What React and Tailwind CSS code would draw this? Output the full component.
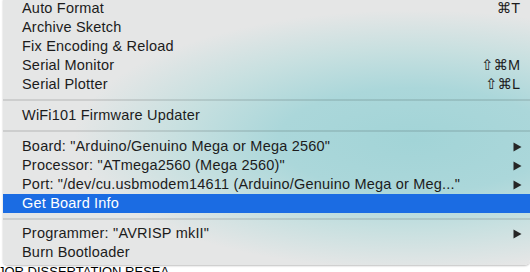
const FONT = {
  fontFamily: '"Liberation Sans", "DejaVu Sans", Arial, sans-serif',
};

function Arrow() {
  return (
    <svg width="9" height="10" viewBox="0 0 9 10" className="shrink-0">
      <polygon points="0.5,0.5 8.5,5 0.5,9.5" fill="#262626" />
    </svg>
  );
}

function Row({ label, shortcut, submenu, active }) {
  return (
    <div
      className={`flex h-[19px] items-center justify-between pl-[19px] ${
        submenu ? "pr-[8px]" : "pr-[10px]"
      } ${active ? "bg-[#1b6ce3] text-white" : "text-[#1c1c1c]"}`}
    >
      <span className="whitespace-nowrap tracking-[0.2px]">{label}</span>
      {shortcut && <span className="whitespace-nowrap">{shortcut}</span>}
      {submenu && <Arrow />}
    </div>
  );
}

function Separator({ className = "" }) {
  return (
    <div className={className}>
      <div className="h-[2px] bg-black/10" />
    </div>
  );
}

export default function App() {
  return (
    <div
      className="h-[272px] w-[530px] overflow-hidden bg-white text-[14.5px] leading-[19px]"
      style={FONT}
    >
      <div className="ml-[3px] mt-[-1px] h-[266px] rounded-b-[5px] bg-[radial-gradient(ellipse_340px_130px_at_78%_53%,#a2d4d7_0%,#abd7da_40%,#c8e0e0_70%,#e5e6e6_100%)] shadow-[0_1px_2px_rgba(0,0,0,0.25)]">
        <Row label="Auto Format" shortcut="⌘T" />
        <Row label="Archive Sketch" />
        <Row label="Fix Encoding & Reload" />
        <Row label="Serial Monitor" shortcut="⇧⌘M" />
        <Row label="Serial Plotter" shortcut="⇧⌘L" />
        <Separator className="pb-[5px] pt-[5px]" />
        <Row label="WiFi101 Firmware Updater" />
        <Separator className="pb-[5px] pt-[5px]" />
        <Row label={'Board: "Arduino/Genuino Mega or Mega 2560"'} submenu />
        <Row label={'Processor: "ATmega2560 (Mega 2560)"'} submenu />
        <Row
          label={'Port: "/dev/cu.usbmodem14611 (Arduino/Genuino Mega or Meg..."'}
          submenu
        />
        <Row label="Get Board Info" active />
        <Separator className="pb-[4px] pt-[5px]" />
        <Row label={'Programmer: "AVRISP mkII"'} submenu />
        <Row label="Burn Bootloader" />
      </div>
      <div className="ml-[-2px] whitespace-nowrap text-[13px] leading-[13px] text-black">
        JOR DISSERTATION RESEA
      </div>
    </div>
  );
}
